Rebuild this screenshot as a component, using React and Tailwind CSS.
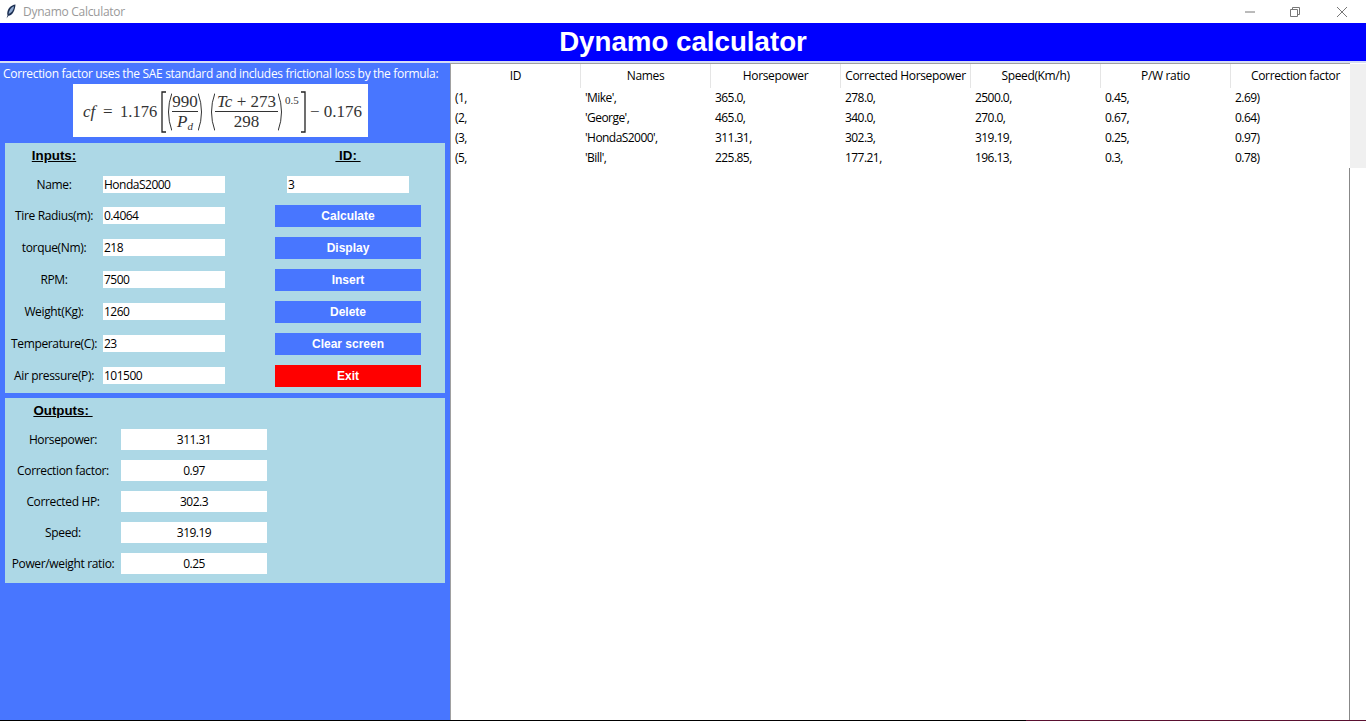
import React from "react";

const uiFont = "font-['Open_Sans',sans-serif] text-[12px] tracking-[-0.35px]";

const inputRows = [
  { label: "Tire Radius(m):", value: "0.4064", button: "Calculate" },
  { label: "torque(Nm):", value: "218", button: "Display" },
  { label: "RPM:", value: "7500", button: "Insert" },
  { label: "Weight(Kg):", value: "1260", button: "Delete" },
  { label: "Temperature(C):", value: "23", button: "Clear screen" },
  { label: "Air pressure(P):", value: "101500", button: "Exit", danger: true },
];

const outputRows = [
  { label: "Horsepower:", value: "311.31" },
  { label: "Correction factor:", value: "0.97" },
  { label: "Corrected HP:", value: "302.3" },
  { label: "Speed:", value: "319.19" },
  { label: "Power/weight ratio:", value: "0.25" },
];

const columns = ["ID", "Names", "Horsepower", "Corrected Horsepower", "Speed(Km/h)", "P/W ratio", "Correction factor"];

const rows = [
  ["(1,", "'Mike',", "365.0,", "278.0,", "2500.0,", "0.45,", "2.69)"],
  ["(2,", "'George',", "465.0,", "340.0,", "270.0,", "0.67,", "0.64)"],
  ["(3,", "'HondaS2000',", "311.31,", "302.3,", "319.19,", "0.25,", "0.97)"],
  ["(5,", "'Bill',", "225.85,", "177.21,", "196.13,", "0.3,", "0.78)"],
];

function Entry({ value, className }) {
  return (
    <input
      readOnly
      value={value}
      className={`block bg-white font-['Open_Sans',sans-serif] text-[12px] tracking-[-0.5px] text-black outline-none ${className}`}
    />
  );
}

function Paren({ right }) {
  return (
    <svg width="5" height="38" viewBox="0 0 5 38" className={right ? "-scale-x-100" : ""}>
      <path d="M4.8 0.5Q-1.8 19 4.8 37.5" fill="none" stroke="#333" strokeWidth="1" />
    </svg>
  );
}

function Bracket({ right }) {
  return (
    <svg width="7" height="42" viewBox="0 0 7 42" className={right ? "-scale-x-100" : ""}>
      <path d="M6 1H2V41H6" fill="none" stroke="#222" strokeWidth="1.3" />
    </svg>
  );
}

function Fraction({ top, bottom, className }) {
  return (
    <div className={`flex flex-col items-center leading-[18px] ${className}`}>
      <div className="w-full border-b border-[#333] text-center whitespace-nowrap">{top}</div>
      <div className="pt-[1px] text-center whitespace-nowrap">{bottom}</div>
    </div>
  );
}

function Formula() {
  return (
    <div className="ml-[73px] flex h-[53px] w-[295px] items-center bg-white pt-[3px] pl-[10px] font-['Liberation_Serif',serif] text-[17px] text-[#333] whitespace-nowrap">
      <span className="w-[20px] italic">cf</span>
      <span className="w-[17px]">=</span>
      <span className="w-[40px] text-[16.5px]">1.176</span>
      <Bracket />
      <Paren />
      <Fraction top="990" bottom={<i>P<sub className="text-[11px]">d</sub></i>} className="w-[26px]" />
      <Paren right />
      <div className="w-[7px]" />
      <Paren />
      <Fraction top={<><i>Tc</i> + 273</>} bottom="298" className="w-[63px]" />
      <Paren right />
      <span className="mb-[24px] ml-[2px] w-[15px] text-[11px]">0.5</span>
      <Bracket right />
      <span className="ml-[3px]">− 0.176</span>
    </div>
  );
}

function Feather() {
  return (
    <svg width="10" height="15" viewBox="0 0 10 15">
      <path d="M9.5 0.5C5 1 1.5 4.5 1.2 9.5L1.5 11.5L0.5 14.5L2.5 11.8C6.5 11.5 9 6.5 9.5 0.5Z" fill="#1c2f52" />
      <path d="M8 2.2C5.2 3.2 3 6 2.6 9.8C5.5 9 7.6 6 8 2.2Z" fill="#8fa9d0" />
    </svg>
  );
}

function TitleBar() {
  return (
    <div className="flex h-[23px] items-center bg-white">
      <div className="ml-[6px] w-[17px]">
        <Feather />
      </div>
      <span className="font-['Open_Sans',sans-serif] text-[12px] tracking-[-0.28px] text-[#999]">Dynamo Calculator</span>
      <div className="ml-auto flex items-center text-[#777]">
        <svg width="12" height="12" viewBox="0 0 12 12" className="mr-[33px]">
          <path d="M1 6H11" stroke="currentColor" strokeWidth="1" />
        </svg>
        <svg width="12" height="12" viewBox="0 0 12 12" className="mr-[35px]">
          <path d="M1.5 3.5H8.5V10.5H1.5ZM3.5 3.5V1.5H10.5V8.5H8.5" fill="none" stroke="currentColor" strokeWidth="1" />
        </svg>
        <svg width="12" height="12" viewBox="0 0 12 12" className="mr-[18px]">
          <path d="M1 1L11 11M11 1L1 11" stroke="currentColor" strokeWidth="1" />
        </svg>
      </div>
    </div>
  );
}

function InputsPanel() {
  return (
    <div className="mx-[5px] bg-[#add8e6] pb-px text-black">
      <div className="flex h-[26px] items-center font-['Liberation_Sans',sans-serif] text-[13.33px] font-bold underline">
        <div className="w-[98px] text-center whitespace-pre">Inputs:</div>
        <div className="ml-[172px] w-[146px] text-center whitespace-pre"> ID: </div>
      </div>
      <div className="flex h-[31px]">
        <div className={`flex h-[31px] w-[98px] items-center justify-center ${uiFont}`}>Name:</div>
        <div className="w-[122px] pt-[7px]">
          <Entry value="HondaS2000" className="h-[17px] w-[122px] pl-[1px]" />
        </div>
        <div className="ml-[62px] pt-[7px]">
          <Entry value="3" className="h-[17px] w-[122px] pl-[1px]" />
        </div>
      </div>
      {inputRows.map((row) => (
        <div key={row.label} className="flex h-[32px]">
          <div className={`flex h-[32px] w-[98px] items-center justify-center whitespace-nowrap ${uiFont}`}>{row.label}</div>
          <div className="w-[122px] pt-[7px]">
            <Entry value={row.value} className="h-[17px] w-[122px] pl-[1px]" />
          </div>
          <div className="ml-[50px] pt-[5px]">
            <button className={`block h-[22px] w-[146px] font-['Liberation_Sans',sans-serif] text-[12px] font-bold text-white ${row.danger ? "bg-[#ff0000]" : "bg-[#4876ff]"}`}>
              {row.button}
            </button>
          </div>
        </div>
      ))}
    </div>
  );
}

function OutputsPanel() {
  return (
    <div className="mx-[5px] mt-[5px] bg-[#add8e6] pb-[9px] text-black">
      <div className="flex h-[31px] w-[116px] items-center justify-center pb-[5px] font-['Liberation_Sans',sans-serif] text-[13.33px] font-bold underline whitespace-pre">
        {"Outputs: "}
      </div>
      <div className="flex flex-col gap-[10px]">
        {outputRows.map((row) => (
          <div key={row.label} className="flex h-[21px] items-center">
            <div className={`w-[116px] text-center whitespace-nowrap ${uiFont}`}>{row.label}</div>
            <Entry value={row.value} className="h-[21px] w-[146px] text-center" />
          </div>
        ))}
      </div>
    </div>
  );
}

function ResultsTable() {
  return (
    <div className={`h-[105px] w-[899px] overflow-hidden border-t border-[#a0a0a0] text-black ${uiFont}`}>
      <div className="grid h-[24px] w-[910px] grid-cols-[repeat(7,130px)]">
        {columns.map((col) => (
          <div key={col} className="flex items-center justify-center border-r border-[#e5e5e5] whitespace-nowrap">
            {col}
          </div>
        ))}
      </div>
      {rows.map((row) => (
        <div key={row[0]} className="grid h-[20px] w-[910px] grid-cols-[repeat(7,130px)] items-center tracking-[-0.55px]">
          {row.map((cell, i) => (
            <div key={i} className="pl-[4px] whitespace-nowrap">{cell}</div>
          ))}
        </div>
      ))}
    </div>
  );
}

export default function App() {
  return (
    <div className="flex h-[721px] w-[1366px] flex-col overflow-hidden bg-white">
      <TitleBar />
      <div className="flex h-[38px] items-center justify-center bg-[#0000ff] font-['Liberation_Sans',sans-serif] text-[27.7px] font-bold text-white">
        Dynamo calculator
      </div>
      <div className="h-[2px] bg-[#d5dcf5]" />
      <div className="flex min-h-0 flex-1">
        <div className="w-[450px] bg-[#4876ff]">
          <div className="flex h-[21px] items-center pl-[3px] font-['Open_Sans',sans-serif] text-[12px] tracking-[-0.32px] whitespace-nowrap text-white">
            Correction factor uses the SAE standard and includes frictional loss by the formula:
          </div>
          <Formula />
          <div className="h-[6px]" />
          <InputsPanel />
          <OutputsPanel />
        </div>
        <div className="flex flex-1 flex-col border-l border-[#a0a0a0]">
          <div className="flex">
            <ResultsTable />
            <div className="mt-px flex-1 bg-[#f0f0f0]" />
          </div>
          <div className="w-[899px] flex-1 border-r border-[#888]" />
        </div>
      </div>
      <div className="flex h-px">
        <div className="flex-1 bg-black" />
        <div className="w-[340px] bg-[#5a1030]" />
      </div>
    </div>
  );
}
